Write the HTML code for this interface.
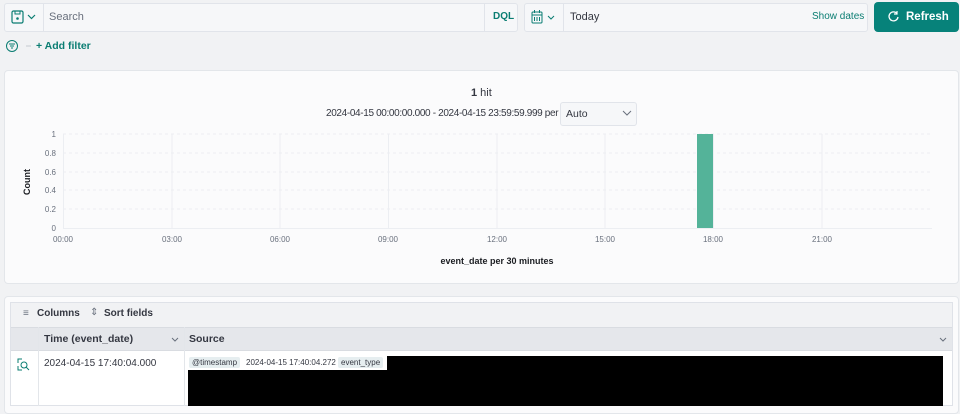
<!DOCTYPE html>
<html><head><meta charset="utf-8"><style>
*{box-sizing:border-box;margin:0;padding:0}
body{width:960px;height:414px;overflow:hidden;background:#f1f2f4;font-family:"Liberation Sans",sans-serif;font-size:11px;color:#343741;position:relative}
.a{position:absolute}
.box{background:#f6f7f9;border:1px solid #e1e4ea;border-radius:3px}
.teal{color:#0a7d72}
</style></head><body>
<div class="a box" style="left:4px;top:3px;width:514px;height:29px"></div>
<div class="a" style="left:43px;top:3px;width:1px;height:29px;background:#e1e4ea"></div>
<div class="a" style="left:484px;top:3px;width:1px;height:29px;background:#e1e4ea"></div>
<svg class="a" style="left:11px;top:10px" width="28" height="14" viewBox="0 0 28 14"><rect x="1" y="1" width="11" height="12" rx="1.5" fill="none" stroke="#0a7d72" stroke-width="1.2"/><rect x="4" y="1" width="5" height="3" fill="none" stroke="#0a7d72"/><circle cx="6.5" cy="8.5" r="1.3" fill="#0a7d72"/><path d="M17 5l3.5 3.5L24 5" fill="none" stroke="#0a7d72" stroke-width="1.2"/></svg>
<div class="a" style="left:49px;top:11px;color:#69707d;font-size:11px">Search</div>
<div class="a teal" style="left:493px;top:11px;font-weight:bold;font-size:10px">DQL</div>
<div class="a box" style="left:524px;top:3px;width:344px;height:29px"></div>
<div class="a" style="left:563px;top:3px;width:1px;height:29px;background:#e1e4ea"></div>
<svg class="a" style="left:531px;top:10px" width="28" height="14" viewBox="0 0 28 14"><rect x="1" y="2" width="10" height="11" rx="1" fill="none" stroke="#0a7d72"/><path d="M1 5h10M3.5 7v4M6 7v4M8.5 7v4M3.5 0v3M8.5 0v3" stroke="#0a7d72"/><path d="M17 6l3 3 3-3" fill="none" stroke="#0a7d72"/></svg>
<div class="a" style="left:570px;top:11px">Today</div>
<div class="a teal" style="left:812px;top:11px;font-size:10px">Show dates</div>
<div class="a" style="left:874px;top:2px;width:85px;height:30px;background:#07827a;border-radius:4px;color:#fff;font-weight:bold;font-size:11.5px;line-height:30px;padding-left:32px">Refresh</div>
<svg class="a" style="left:887px;top:10px" width="13" height="13" viewBox="0 0 13 13"><path d="M10 3.5A4.5 4.5 0 1 0 11 7" fill="none" stroke="#fff" stroke-width="1.3"/><path d="M10 1v3H7" fill="none" stroke="#fff" stroke-width="1.2"/></svg>
<svg class="a" style="left:5px;top:39px" width="30" height="14" viewBox="0 0 30 14"><circle cx="7" cy="7" r="5.5" fill="none" stroke="#0a7d72"/><path d="M4 5h6M5 7h4M6 9h2" stroke="#0a7d72"/><path d="M21 7h5" stroke="#c5c9d0"/></svg>
<div class="a teal" style="left:36px;top:40px;font-weight:bold;font-size:10.5px">+ Add filter</div>
<div class="a" style="left:4px;top:70px;width:955px;height:214px;background:#fbfbfc;border:1px solid #e3e6ea;border-radius:4px"></div>
<div class="a" style="left:471px;top:87px;font-size:11px"><b>1</b> hit</div>
<div class="a" style="left:326px;top:108px;font-size:10px;white-space:nowrap;letter-spacing:-0.35px">2024-04-15 00:00:00.000 - 2024-04-15 23:59:59.999 per</div>
<div class="a box" style="left:560px;top:102px;width:77px;height:24px"></div>
<div class="a" style="left:566px;top:108px;font-size:10.5px">Auto</div>
<svg class="a" style="left:622px;top:110px" width="10" height="6"><path d="M1 1l4 4 4-4" fill="none" stroke="#69707d"/></svg>
<svg class="a" style="left:0;top:125px" width="960" height="150">
<g stroke="#eceef2" stroke-dasharray="3 3"><line x1="63" y1="9" x2="932" y2="9"/><line x1="63" y1="28" x2="932" y2="28"/><line x1="63" y1="47" x2="932" y2="47"/><line x1="63" y1="65" x2="932" y2="65"/><line x1="63" y1="84" x2="932" y2="84"/></g>
<g stroke="#eceef2"><line x1="63.5" y1="9" x2="63.5" y2="104"/><line x1="172" y1="9" x2="172" y2="104"/><line x1="280" y1="9" x2="280" y2="104"/><line x1="388.5" y1="9" x2="388.5" y2="104"/><line x1="497" y1="9" x2="497" y2="104"/><line x1="605" y1="9" x2="605" y2="104"/><line x1="713.5" y1="9" x2="713.5" y2="104"/><line x1="822" y1="9" x2="822" y2="104"/><line x1="63" y1="103.5" x2="932" y2="103.5"/></g>
<rect x="697" y="9" width="16" height="94" fill="#54b399"/>
<g font-size="8" fill="#69707d" text-anchor="end" font-family="Liberation Sans"><text x="56" y="12">1</text><text x="56" y="31">0.8</text><text x="56" y="50">0.6</text><text x="56" y="68">0.4</text><text x="56" y="87">0.2</text><text x="56" y="106">0</text></g>
<g font-size="8" fill="#69707d" text-anchor="middle" font-family="Liberation Sans"><text x="63" y="117">00:00</text><text x="172" y="117">03:00</text><text x="280" y="117">06:00</text><text x="388" y="117">09:00</text><text x="497" y="117">12:00</text><text x="605" y="117">15:00</text><text x="713" y="117">18:00</text><text x="822" y="117">21:00</text></g>
<text x="497" y="139" font-size="9" font-weight="bold" text-anchor="middle" fill="#1a1c21" font-family="Liberation Sans">event_date per 30 minutes</text>
<text transform="translate(30 57) rotate(-90)" font-size="9" font-weight="bold" text-anchor="middle" fill="#1a1c21" font-family="Liberation Sans">Count</text>
</svg>
<div class="a" style="left:4px;top:296px;width:955px;height:118px;background:#fbfbfc;border:1px solid #e3e6ea;border-radius:4px"></div>
<div class="a" style="left:10px;top:302px;width:943px;height:104px;background:#fff;border:1px solid #dfe2e8"></div>
<div class="a" style="left:11px;top:303px;width:941px;height:24px;background:#f1f2f4"></div>
<div class="a" style="left:23px;top:308px;font-size:10px;color:#69707d">&#8801;</div>
<div class="a" style="left:37px;top:308px;font-weight:bold;font-size:10px">Columns</div>
<div class="a" style="left:90px;top:307px;font-size:10px;color:#69707d">&#8661;</div>
<div class="a" style="left:104px;top:308px;font-weight:bold;font-size:10px">Sort fields</div>
<div class="a" style="left:11px;top:327px;width:941px;height:24px;background:#e5e7eb;border-top:1px solid #d9dce1;border-bottom:1px solid #d9dce1"></div>
<div class="a" style="left:38px;top:327px;width:1px;height:79px;background:#e3e6ea"></div>
<div class="a" style="left:184px;top:327px;width:1px;height:79px;background:#e3e6ea"></div>
<div class="a" style="left:44px;top:333px;font-weight:bold;font-size:10.5px">Time (event_date)</div>
<div class="a" style="left:189px;top:333px;font-weight:bold;font-size:10.5px">Source</div>
<svg class="a" style="left:171px;top:337px" width="8" height="5"><path d="M1 1l3 3 3-3" fill="none" stroke="#69707d"/></svg>
<svg class="a" style="left:939px;top:337px" width="8" height="5"><path d="M1 1l3 3 3-3" fill="none" stroke="#69707d"/></svg>
<svg class="a" style="left:17px;top:358px" width="13" height="13" viewBox="0 0 13 13"><path d="M5 1H1v4M1 8v4h4" fill="none" stroke="#0a7d72"/><circle cx="7" cy="7" r="3" fill="none" stroke="#0a7d72"/><path d="M9 9l3 3" stroke="#0a7d72"/></svg>
<div class="a" style="left:44px;top:358px;font-size:10px">2024-04-15 17:40:04.000</div>
<div class="a" style="left:189px;top:357px;background:#e6eef0;font-size:8px;padding:1px 3px;border-radius:2px">@timestamp</div>
<div class="a" style="left:246px;top:358px;font-size:8px">2024-04-15 17:40:04.272</div>
<div class="a" style="left:338px;top:357px;background:#e6eef0;font-size:8px;padding:1px 3px;border-radius:2px">event_type</div>
<div class="a" style="left:387px;top:356px;width:556px;height:15px;background:#000"></div>
<div class="a" style="left:188px;top:370px;width:755px;height:36px;background:#000"></div>
</body></html>
